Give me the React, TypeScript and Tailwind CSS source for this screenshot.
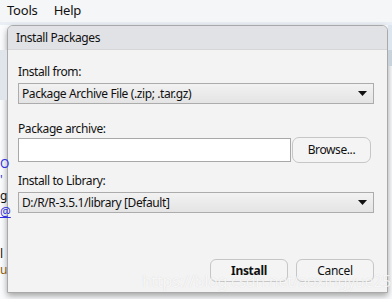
import { useState } from "react";

const FONT = "font-['Noto_Sans','Open_Sans',sans-serif]";

function Caret() {
  return (
    <svg width="9" height="5" viewBox="0 0 9 5" className="shrink-0">
      <path d="M0 0 H9 L4.5 5 Z" fill="#111" />
    </svg>
  );
}

function Dropdown({ value }: { value: string }) {
  return (
    <div className="flex h-[21px] items-center justify-between border border-[#acacac] bg-gradient-to-b from-[#f2f2f2] to-[#e4e4e4] pl-[3px] pr-[6px] text-[12px] tracking-[-0.4px] text-[#111]">
      <span className="leading-none">{value}</span>
      <Caret />
    </div>
  );
}

function Button({ label, bold }: { label: string; bold?: boolean }) {
  return (
    <button
      className={`flex h-[23px] w-full items-center justify-center rounded-[6px] border border-[#c6c6c6] bg-[#f4f4f4] text-[12px] tracking-[-0.3px] text-[#111] ${
        bold ? "font-bold" : ""
      }`}
    >
      {label}
    </button>
  );
}

export default function App() {
  const [path, setPath] = useState("");

  return (
    <div className={`relative h-[299px] w-[392px] overflow-hidden bg-[#fafbfc] ${FONT}`}>
      {/* menu bar */}
      <div className="flex h-[22px] items-center gap-[16px] bg-[#f5f6f7] pl-[7px] text-[13px] tracking-[-0.2px] text-[#111]">
        <span>Tools</span>
        <span>Help</span>
      </div>
      <div className="h-[3px] bg-[#e9eff4]" />

      {/* remnants of the window behind */}
      <div className="absolute left-0 top-[50px] h-[50px] w-[7px] bg-[#dfe5ea]" />
      <div className="absolute left-0 top-[156px] w-[7px] text-[12px] leading-[16px]">
        <div className="text-[#3030e0]">O</div>
        <div className="text-[#3030e0]">'</div>
        <div className="text-[#111]">g</div>
        <div className="text-[#3030e0] underline">@</div>
        <div className="mt-[26px] text-[#111]">l</div>
        <div className="text-[#8a5a10]">u</div>
      </div>
      <div className="absolute right-0 top-[25px] h-[25px] w-[4px] bg-[#dde6ee]" />
      <div className="absolute right-0 top-[50px] h-[16px] w-[4px] bg-[#c9d3db]" />

      {/* dialog */}
      <div className="ml-[7px] flex h-[268px] w-[381px] flex-col overflow-hidden rounded-t-[6px] border border-[#a9a9a9] bg-[#f3f3f3] shadow-[0_3px_6px_rgba(0,0,0,0.35)]">
        <div className="flex h-[24px] shrink-0 items-center border-b border-[#d6d6d8] bg-[#e1e2e5] pl-[8px] text-[12px] tracking-[-0.4px] text-[#111]">
          Install Packages
        </div>

        <div className="flex flex-1 flex-col pl-[10px] pr-[13px] pt-[14px] pb-[10px] text-[12px] tracking-[-0.4px] text-[#111]">
          <div className="h-[16px] leading-[16px]">Install from:</div>
          <div className="mt-[3px]">
            <Dropdown value="Package Archive File (.zip; .tar.gz)" />
          </div>

          <div className="mt-[17px] h-[16px] leading-[16px]">Package archive:</div>
          <div className="flex items-center gap-[1px]">
            <input
              value={path}
              onChange={(e) => setPath(e.target.value)}
              className="h-[24px] w-[273px] border border-[#a8a8a8] bg-white px-1 text-[12px] outline-none"
            />
            <div className="flex h-[26px] w-[79px] items-center justify-center rounded-[7px] border border-[#c6c6c6] bg-[#f4f4f4] text-[12px]">
              Browse...
            </div>
          </div>

          <div className="mt-[10px] h-[16px] leading-[16px]">Install to Library:</div>
          <div className="mt-[3px]">
            <Dropdown value="D:/R/R-3.5.1/library [Default]" />
          </div>

          <div className="mt-auto flex justify-end gap-[8px]">
            <div className="w-[78px]">
              <Button label="Install" bold />
            </div>
            <div className="w-[78px]">
              <Button label="Cancel" />
            </div>
          </div>
        </div>
      </div>

      {/* watermark */}
      <div className="pointer-events-none absolute left-[142px] top-[271px] whitespace-nowrap text-[16px] leading-[20px] tracking-[-0.3px] text-white/80 [text-shadow:0_0_1px_rgba(0,0,0,0.15)]">
        https://blog.csdn.net/aoxingyue25
      </div>
    </div>
  );
}
